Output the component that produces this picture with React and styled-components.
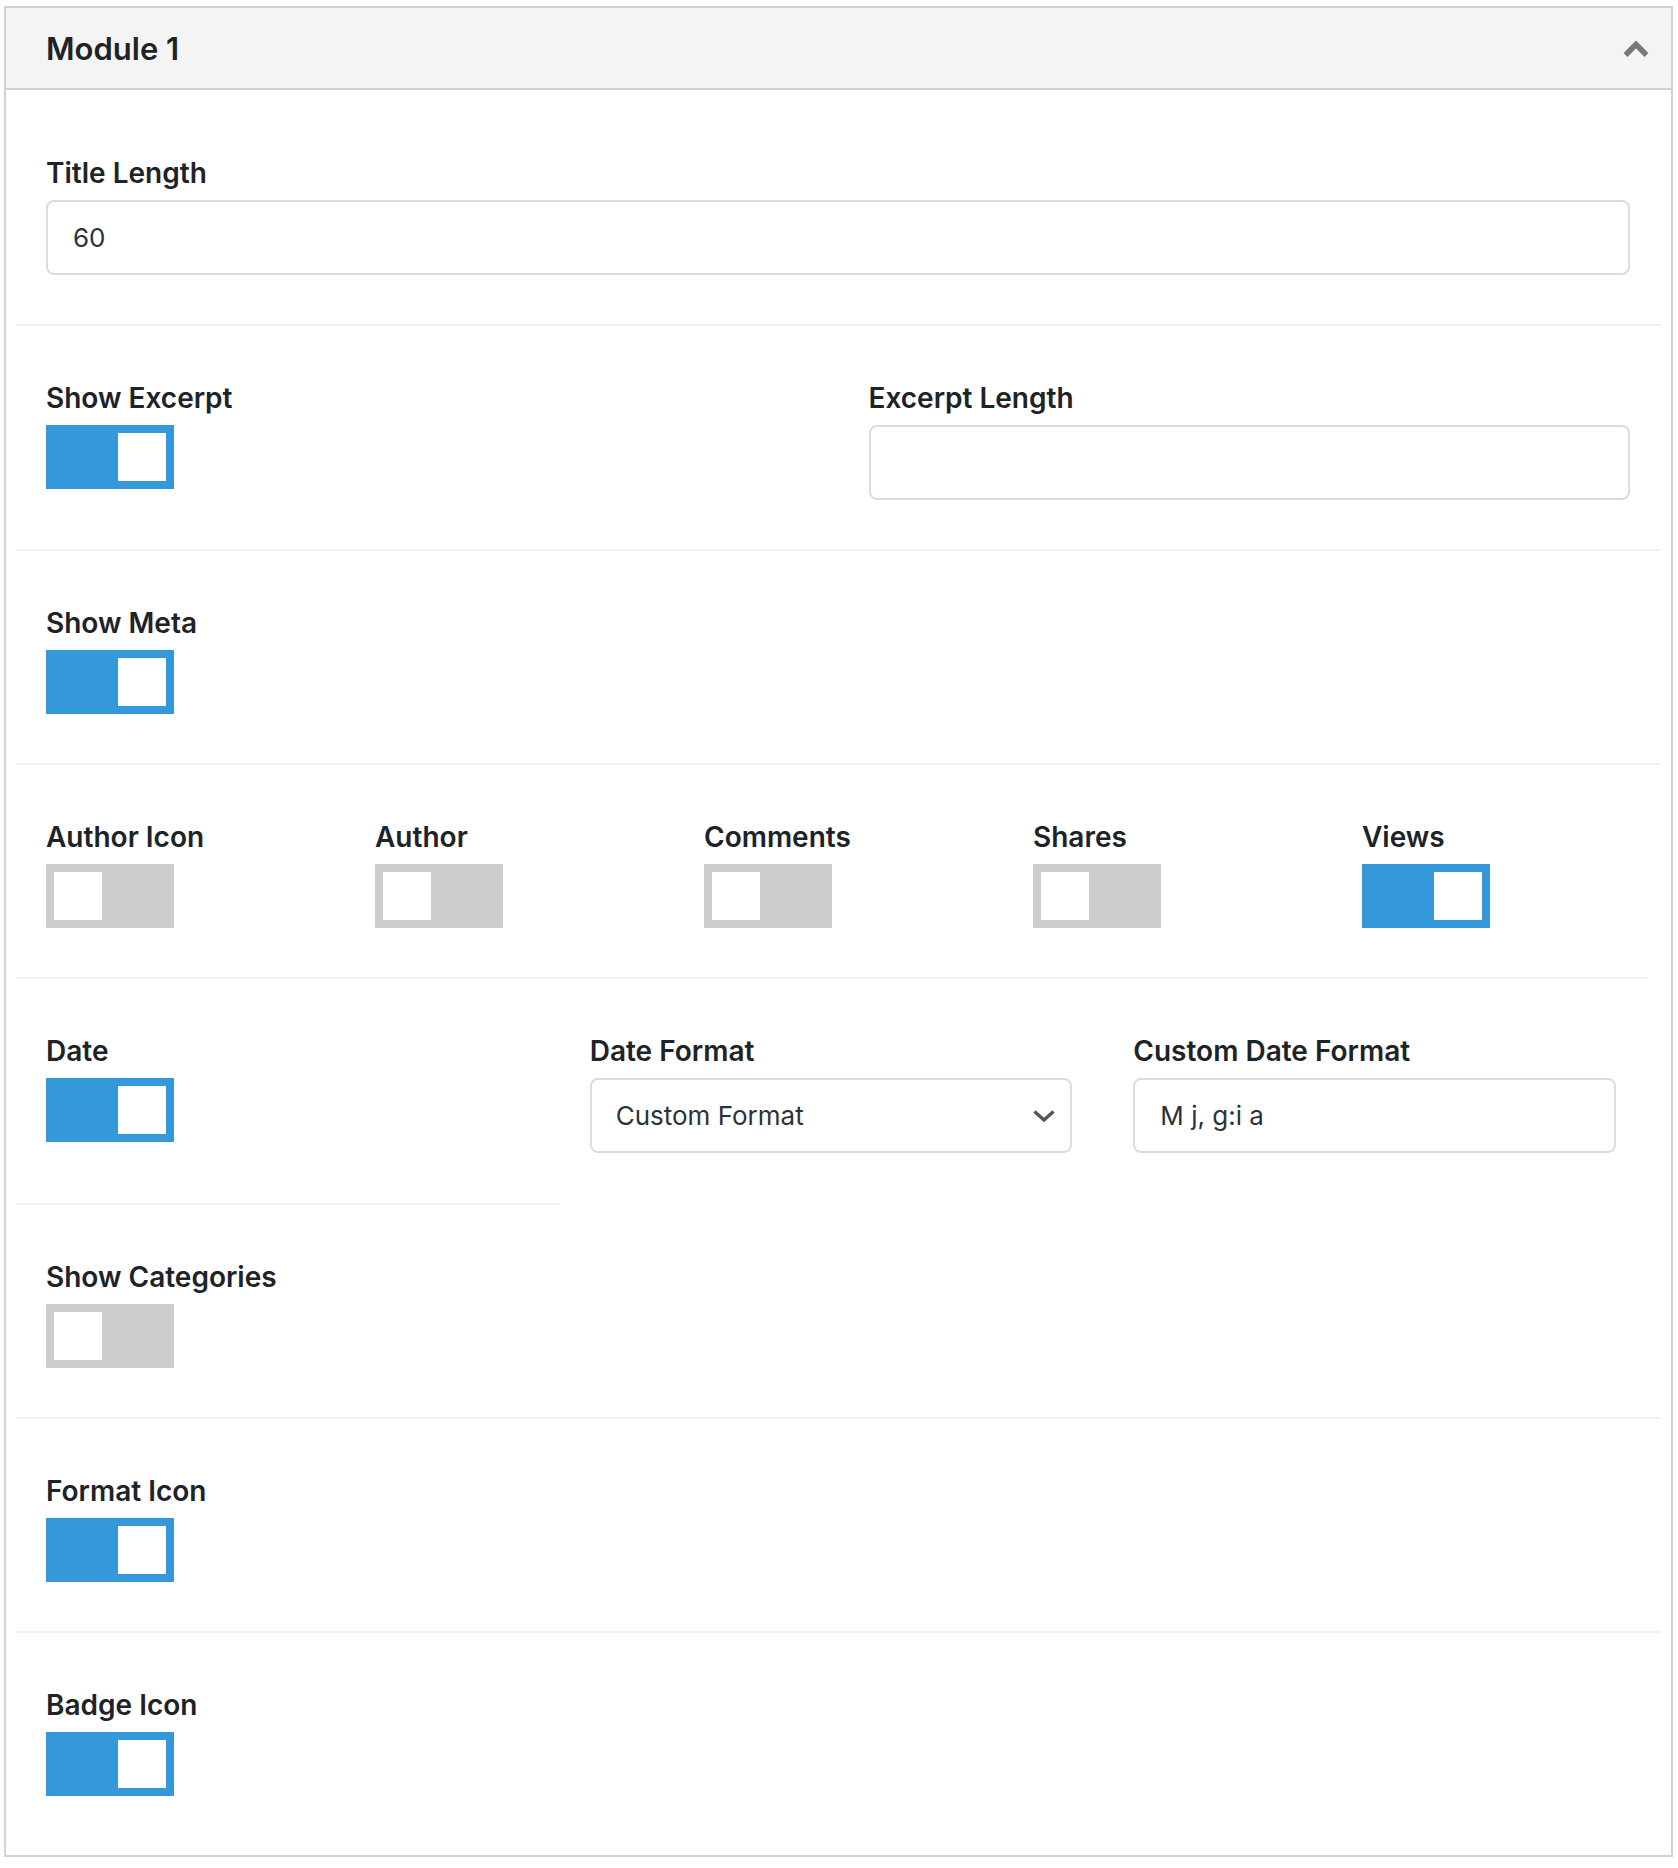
import React, { useState } from 'react'
import styled, { createGlobalStyle } from 'styled-components'

const GlobalStyle = createGlobalStyle`
  body {
    margin: 0;
    background: #fff;
    font-family: Inter, "Noto Sans", "Liberation Sans", sans-serif;
  }
  * {
    box-sizing: border-box;
  }
`

const Toggle = ({ on, onChange }) => (
  <StyledToggle type="button" $on={on} onClick={onChange}>
    <StyledKnob />
  </StyledToggle>
)

const Field = ({ label, children, divider }) => (
  <StyledField $divider={divider}>
    <StyledLabel>{label}</StyledLabel>
    {children}
  </StyledField>
)

const ChevronUp = () => (
  <svg width="28" height="20" viewBox="0 0 28 20">
    <polyline
      points="3.5,17 14,6.5 24.5,17"
      fill="none"
      stroke="#787878"
      strokeWidth="5.5"
      strokeLinejoin="miter"
    />
  </svg>
)

const ChevronDown = () => (
  <svg width="24" height="14" viewBox="0 0 24 14">
    <polyline
      points="2.5,2.5 12,11 21.5,2.5"
      fill="none"
      stroke="#50575e"
      strokeWidth="3.4"
    />
  </svg>
)

const App = () => {
  const [flags, setFlags] = useState({
    excerpt: true,
    meta: true,
    authorIcon: false,
    author: false,
    comments: false,
    shares: false,
    views: true,
    date: true,
    categories: false,
    formatIcon: true,
    badgeIcon: true
  })

  const flip = key => () => setFlags({ ...flags, [key]: !flags[key] })

  return (
    <>
      <GlobalStyle />
      <StyledPage>
        <StyledPanel>
          <StyledHeader>
            <StyledTitle>Module 1</StyledTitle>
            <ChevronUp />
          </StyledHeader>

          <StyledBody>
            <StyledRow>
              <Field label="Title Length">
                <StyledInput defaultValue="60" />
              </Field>
            </StyledRow>

            <StyledRow $cols={2}>
              <Field label="Show Excerpt">
                <Toggle on={flags.excerpt} onChange={flip('excerpt')} />
              </Field>
              <Field label="Excerpt Length">
                <StyledInput defaultValue="" />
              </Field>
            </StyledRow>

            <StyledRow>
              <Field label="Show Meta">
                <Toggle on={flags.meta} onChange={flip('meta')} />
              </Field>
            </StyledRow>

            <StyledRow $cols={5} $plain>
              <Field label="Author Icon">
                <Toggle on={flags.authorIcon} onChange={flip('authorIcon')} />
              </Field>
              <Field label="Author">
                <Toggle on={flags.author} onChange={flip('author')} />
              </Field>
              <Field label="Comments">
                <Toggle on={flags.comments} onChange={flip('comments')} />
              </Field>
              <Field label="Shares">
                <Toggle on={flags.shares} onChange={flip('shares')} />
              </Field>
              <Field label="Views">
                <Toggle on={flags.views} onChange={flip('views')} />
              </Field>
            </StyledRow>

            <StyledDateRow>
              <Field label="Date" divider>
                <Toggle on={flags.date} onChange={flip('date')} />
              </Field>
              <Field label="Date Format">
                <StyledSelect>
                  <span>Custom Format</span>
                  <ChevronDown />
                </StyledSelect>
              </Field>
              <Field label="Custom Date Format">
                <StyledInput defaultValue="M j, g:i a" />
              </Field>
            </StyledDateRow>

            <StyledRow>
              <Field label="Show Categories">
                <Toggle on={flags.categories} onChange={flip('categories')} />
              </Field>
            </StyledRow>

            <StyledRow>
              <Field label="Format Icon">
                <Toggle on={flags.formatIcon} onChange={flip('formatIcon')} />
              </Field>
            </StyledRow>

            <StyledRow>
              <Field label="Badge Icon">
                <Toggle on={flags.badgeIcon} onChange={flip('badgeIcon')} />
              </Field>
            </StyledRow>
          </StyledBody>
        </StyledPanel>
      </StyledPage>
    </>
  )
}

const StyledPage = styled.div`
  padding: 6px 0 0 4px;
`
const StyledPanel = styled.div`
  width: 1669px;
  border: 2px solid #d2d2d2;
  background: #fff;
`
const StyledHeader = styled.div`
  display: flex;
  align-items: center;
  justify-content: space-between;
  height: 82px;
  padding: 0 21px 0 40px;
  background: #f4f4f4;
  border-bottom: 2px solid #d2d2d2;
`
const StyledTitle = styled.h2`
  margin: 0;
  font-size: 31px;
  font-weight: 600;
  color: #1d2327;
`
const StyledBody = styled.div`
  padding: 11px 10px 10px 10px;
`
const StyledRow = styled.div`
  display: grid;
  grid-template-columns: repeat(${p => p.$cols || 1}, 1fr);
  border-bottom: ${p => (p.$plain ? 'none' : '2px solid #f0f0f1')};

  &:last-child {
    border-bottom: none;
  }
`
const StyledDateRow = styled.div`
  display: grid;
  grid-template-columns: repeat(3, 1fr);
  margin-right: 14px;
  border-top: 2px solid #f0f0f1;

  & > div {
    padding-bottom: 52px;
  }
`
const StyledField = styled.div`
  padding: 53px 31px 49px 30px;
  border-bottom: ${p => (p.$divider ? '2px solid #f0f0f1' : 'none')};
`
const StyledLabel = styled.label`
  display: block;
  margin-bottom: 8px;
  font-size: 28px;
  line-height: 38px;
  font-weight: 600;
  color: #1d2327;
`
const StyledInput = styled.input`
  display: block;
  width: 100%;
  height: 75px;
  padding: 0 25px;
  border: 2px solid #dcdcde;
  border-radius: 8px;
  font-family: inherit;
  font-size: 26px;
  color: #2c3338;
  background: #fff;
  outline: none;
`
const StyledSelect = styled.div`
  display: flex;
  align-items: center;
  justify-content: space-between;
  height: 75px;
  padding: 0 14px 0 24px;
  border: 2px solid #dcdcde;
  border-radius: 8px;
  font-size: 26px;
  color: #2c3338;
`
const StyledToggle = styled.button`
  display: flex;
  justify-content: ${p => (p.$on ? 'flex-end' : 'flex-start')};
  width: 128px;
  height: 64px;
  padding: 8px;
  border: 0;
  border-radius: 0;
  background: ${p => (p.$on ? '#3498db' : '#cccccc')};
  cursor: pointer;
`
const StyledKnob = styled.span`
  display: block;
  width: 48px;
  height: 48px;
  background: #fff;
`

export default App
